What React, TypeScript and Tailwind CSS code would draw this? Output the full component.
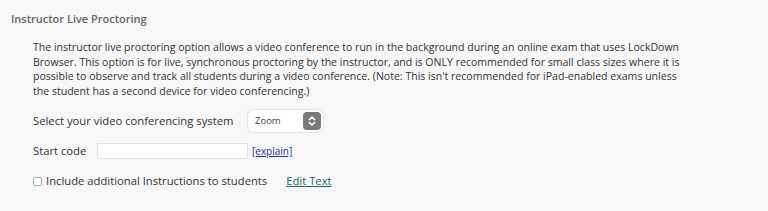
export default function App() {
  return (
    <div
      className="w-[768px] h-[211px] bg-[#f7f7f7] text-[11.25px] text-[#333]"
      style={{ fontFamily: '"Open Sans", "Liberation Sans", sans-serif' }}
    >
      <div className="pl-[11px] pt-[11px] text-[11px] leading-[15px] font-semibold text-[#666]">
        Instructor Live Proctoring
      </div>
      <div className="pl-[33px] pt-[14px]">
        <p className="w-[660px] text-[10.55px] leading-[14.5px]">
          The instructor live proctoring option allows a video conference to run in the background during an online exam that uses LockDown Browser. This option is for live, synchronous proctoring by the instructor, and is ONLY recommended for small class sizes where it is possible to observe and track all students during a video conference. (Note: This isn't recommended for iPad-enabled exams unless the student has a second device for video conferencing.)
        </p>
        <div className="flex items-center mt-[12px] h-[22px]">
          <span className="w-[215px]">Select your video conferencing system</span>
          <div className="flex items-center justify-between w-[75px] h-[22px] bg-white rounded-[5px] shadow-[0_0_2px_rgba(0,0,0,0.25)] pl-[7px] pr-[2px]">
            <span className="text-[9.5px] text-[#444]">Zoom</span>
            <div className="w-[18px] h-[18px] rounded-[4px] bg-[#7a7a7a] flex items-center justify-center">
              <svg width="10" height="12" viewBox="0 0 10 12" fill="none" stroke="white" strokeWidth="1.6" strokeLinecap="round" strokeLinejoin="round">
                <path d="M2.5 4.5 L5 2 L7.5 4.5" />
                <path d="M2.5 7.5 L5 10 L7.5 7.5" />
              </svg>
            </div>
          </div>
        </div>
        <div className="flex items-center mt-[11px] h-[16px]">
          <span className="w-[64px]">Start code</span>
          <div className="w-[151px] h-[16px] bg-white border border-[#e4e4e4]" />
          <a className="ml-[4px] text-[10px] text-[#2a2a9a] underline">[explain]</a>
        </div>
        <div className="flex items-center mt-[14px] h-[16px]">
          <span className="w-[9px] h-[9px] border border-[#aaa] rounded-[2px] bg-white" />
          <span className="ml-[4px]">Include additional Instructions to students</span>
          <a className="ml-[19px] text-[#2d5b6b] underline">Edit Text</a>
        </div>
      </div>
    </div>
  );
}
